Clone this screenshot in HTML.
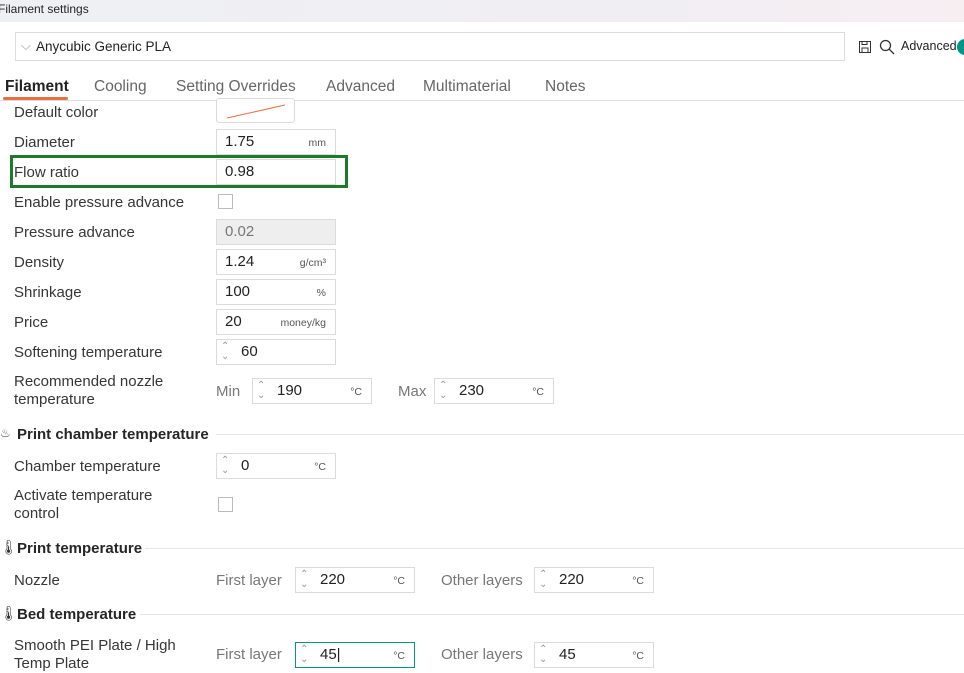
<!DOCTYPE html><html><head><style>
body{margin:0;width:964px;height:659px;overflow:hidden;background:#fff;font-family:"Liberation Sans",sans-serif;color:#262e30;position:relative}
.a{position:absolute;white-space:nowrap}
.l{font-size:15px;color:#363636}
.in{position:absolute;border:1px solid #dbdbdb;background:#fff;box-sizing:border-box;height:26px;font-size:15px;line-height:24px;color:#222}
.u{position:absolute;right:9px;font-size:10.5px;color:#555;top:1px}
.sp{position:absolute;left:4px;top:2px;font-size:10px;line-height:10px;color:#999}
.h{font-weight:bold;font-size:15px;color:#262626}
.hr{position:absolute;height:1px;background:#e6e6e6;right:0}
.g{color:#777;font-size:15px}
.cb{position:absolute;width:15px;height:15px;border:1px solid #bbb;box-sizing:border-box}
.t{position:absolute;top:78px;font-size:15.5px;color:#666;white-space:nowrap}
</style></head><body>
<div class="a" style="left:0;top:0;width:964px;height:22px;background:linear-gradient(90deg,#eef0f3,#f1eef3 70%,#f7eef2)"></div>
<div class="a" style="left:-2px;top:2px;font-size:12px;color:#222">Filament settings</div>
<div class="a" style="left:15px;top:32px;width:830px;height:29px;border:1px solid #dcdcdc;box-sizing:border-box"></div>
<div class="a" style="left:21px;top:38px;font-size:13px;color:#999">⌵</div>
<div class="a" style="left:36px;top:39px;font-size:13.5px;color:#222">Anycubic Generic PLA</div>
<svg class="a" style="left:858px;top:40px" width="14" height="14"><rect x="1.5" y="1.5" width="11" height="11" fill="none" stroke="#333"/><rect x="4" y="1.5" width="5" height="3" fill="none" stroke="#333"/><rect x="4" y="8" width="6" height="4.5" fill="none" stroke="#333"/></svg>
<svg class="a" style="left:879px;top:39px" width="16" height="16"><circle cx="6.5" cy="6.5" r="5" fill="none" stroke="#333" stroke-width="1.3"/><line x1="10" y1="10" x2="15" y2="15" stroke="#333" stroke-width="1.3"/></svg>
<div class="a" style="left:901px;top:39px;font-size:12.5px;color:#222">Advanced</div>
<div class="a" style="left:957px;top:39px;width:16px;height:16px;border-radius:8px;background:#009688"></div>
<div class="t" style="left:5px;font-weight:bold;color:#222">Filament</div>
<div class="a" style="left:3px;top:97px;width:65px;height:3px;background:#e5703f;border-radius:2px"></div>
<div class="t" style="left:94px">Cooling</div>
<div class="t" style="left:176px">Setting Overrides</div>
<div class="t" style="left:326px">Advanced</div>
<div class="t" style="left:423px">Multimaterial</div>
<div class="t" style="left:545px">Notes</div>
<div class="hr" style="left:0;top:100px;background:#ddd"></div>

<div class="a l" style="left:14px;top:104px">Default color</div>
<div class="in" style="left:216px;top:98px;width:79px;height:25px;border-radius:3px"><svg width="79" height="22"><line x1="10" y1="19" x2="68" y2="6" stroke="#e5703f"/></svg></div>
<div class="a l" style="left:14px;top:134px">Diameter</div>
<div class="in" style="left:216px;top:129px;width:120px;padding-left:8px">1.75<span class="u">mm</span></div>
<div class="a" style="left:10px;top:155px;width:338px;height:33px;border:3px solid #1e7a2a;box-sizing:border-box"></div>
<div class="a l" style="left:14px;top:164px">Flow ratio</div>
<div class="in" style="left:216px;top:159px;width:120px;padding-left:8px">0.98</div>
<div class="a l" style="left:14px;top:194px">Enable pressure advance</div>
<div class="cb" style="left:218px;top:194px"></div>
<div class="a l" style="left:14px;top:224px">Pressure advance</div>
<div class="in" style="left:216px;top:219px;width:120px;padding-left:8px;background:#eee;color:#777">0.02</div>
<div class="a l" style="left:14px;top:254px">Density</div>
<div class="in" style="left:216px;top:249px;width:120px;padding-left:8px">1.24<span class="u">g/cm³</span></div>
<div class="a l" style="left:14px;top:284px">Shrinkage</div>
<div class="in" style="left:216px;top:279px;width:120px;padding-left:8px">100<span class="u">%</span></div>
<div class="a l" style="left:14px;top:314px">Price</div>
<div class="in" style="left:216px;top:309px;width:120px;padding-left:8px">20<span class="u">money/kg</span></div>
<div class="a l" style="left:14px;top:344px">Softening temperature</div>
<div class="in" style="left:216px;top:339px;width:120px;padding-left:24px"><span class="sp">⌃<br>⌄</span>60</div>
<div class="a l" style="left:14px;top:373px;line-height:18px">Recommended nozzle<br>temperature</div>
<div class="a g" style="left:216px;top:383px">Min</div>
<div class="in" style="left:252px;top:378px;width:120px;padding-left:24px"><span class="sp">⌃<br>⌄</span>190<span class="u">°C</span></div>
<div class="a g" style="left:398px;top:383px">Max</div>
<div class="in" style="left:434px;top:378px;width:120px;padding-left:24px"><span class="sp">⌃<br>⌄</span>230<span class="u">°C</span></div>

<div class="a" style="left:0;top:426px;font-size:12px;color:#555">♨</div>
<div class="a h" style="left:17px;top:426px">Print chamber temperature</div>
<div class="hr" style="left:216px;top:434px"></div>
<div class="a l" style="left:14px;top:458px">Chamber temperature</div>
<div class="in" style="left:216px;top:453px;width:120px;padding-left:24px"><span class="sp">⌃<br>⌄</span>0<span class="u">°C</span></div>
<div class="a l" style="left:14px;top:487px;line-height:18px">Activate temperature<br>control</div>
<div class="cb" style="left:218px;top:497px"></div>

<div class="a" style="left:0;top:539px;font-size:14px;color:#333">🌡</div>
<div class="a h" style="left:17px;top:540px">Print temperature</div>
<div class="hr" style="left:145px;top:548px"></div>
<div class="a l" style="left:14px;top:572px">Nozzle</div>
<div class="a g" style="left:216px;top:572px">First layer</div>
<div class="in" style="left:295px;top:567px;width:120px;padding-left:24px"><span class="sp">⌃<br>⌄</span>220<span class="u">°C</span></div>
<div class="a g" style="left:441px;top:572px">Other layers</div>
<div class="in" style="left:534px;top:567px;width:120px;padding-left:24px"><span class="sp">⌃<br>⌄</span>220<span class="u">°C</span></div>

<div class="a" style="left:0;top:605px;font-size:14px;color:#333">🌡</div>
<div class="a h" style="left:17px;top:606px">Bed temperature</div>
<div class="hr" style="left:140px;top:614px"></div>
<div class="a l" style="left:14px;top:637px;line-height:18px">Smooth PEI Plate / High<br>Temp Plate</div>
<div class="a g" style="left:216px;top:646px">First layer</div>
<div class="in" style="left:295px;top:642px;width:120px;padding-left:24px;border-color:#009688"><span class="sp">⌃<br>⌄</span>45|<span class="u">°C</span></div>
<div class="a g" style="left:441px;top:646px">Other layers</div>
<div class="in" style="left:534px;top:642px;width:120px;padding-left:24px"><span class="sp">⌃<br>⌄</span>45<span class="u">°C</span></div>
</body></html>
